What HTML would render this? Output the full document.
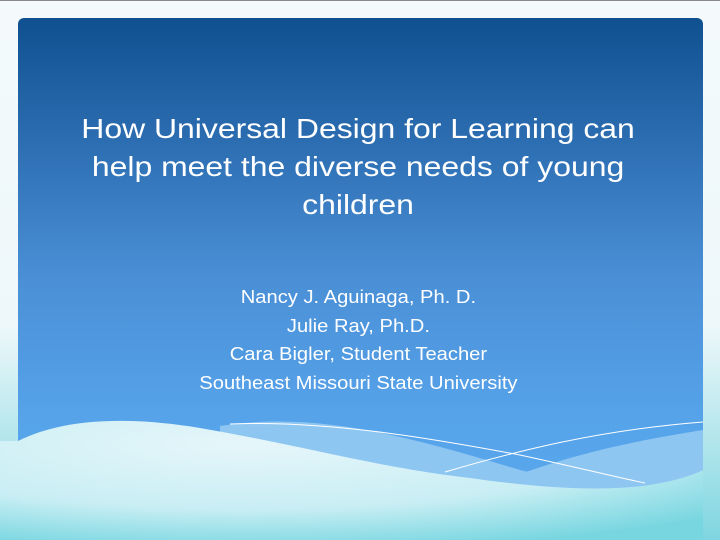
<!DOCTYPE html>
<html><head><style>
html,body{margin:0;padding:0}
body{width:720px;height:540px;position:relative;overflow:hidden;font-family:"Liberation Sans",sans-serif;
background:linear-gradient(180deg,#f4fafb 0%,#eef8fa 60%,#7fd6e0 100%);}
.top{position:absolute;left:0;top:0;width:720px;height:1px;background:#8a8a8a}
.panel{position:absolute;left:18px;top:18px;width:685px;height:470px;border-radius:6px 6px 0 0;
background:linear-gradient(180deg,#0f5090 0%,#2b6cb0 25%,#4a8fd6 55%,#56a3ea 85%,#58a6ec 100%)}
svg{position:absolute;left:0;top:0}
.t{position:absolute;left:18px;width:685px;text-align:center;color:#fff;transform:scaleX(1.14);transform-origin:360px 0}
.h{top:110px;font-size:28px;line-height:38px}
.s{top:283px;font-size:18px;line-height:28.5px;transform:scaleX(1.12)}
</style></head><body>
<div class="top"></div>
<div class="panel"></div>
<svg width="720" height="540">
<defs>
<radialGradient id="g" cx="0.35" cy="0.2" r="0.9">
<stop offset="0" stop-color="#e6f6fa"/><stop offset="0.6" stop-color="#c8eef4"/><stop offset="1" stop-color="#78d6e0"/>
</radialGradient>
</defs>
<path d="M220 426 C320 410 420 440 520 470 C600 490 650 478 703 455 L703 500 L220 500Z" fill="#8ec6f2"/>
<path d="M480 490 C560 455 640 440 703 430 L703 500Z" fill="#8ec6f2"/>
<path d="M18 441 C60 420 120 415 200 428 C300 445 380 468 470 478 C540 488 600 492 650 485 C680 480 695 474 703 470 L703 540 L0 540 L0 441Z" fill="url(#g)"/>
<path d="M230 424 C330 420 440 440 520 455 C580 468 620 478 645 483" fill="none" stroke="#fff" stroke-width="1"/>
<path d="M445 472 C520 450 600 430 703 422" fill="none" stroke="#fff" stroke-width="1"/>
</svg>
<div class="t h">How Universal Design for Learning can<br>help meet the diverse needs of young<br>children</div>
<div class="t s">Nancy J. Aguinaga, Ph. D.<br>Julie Ray, Ph.D.<br>Cara Bigler, Student Teacher<br>Southeast Missouri State University</div>
</body></html>
